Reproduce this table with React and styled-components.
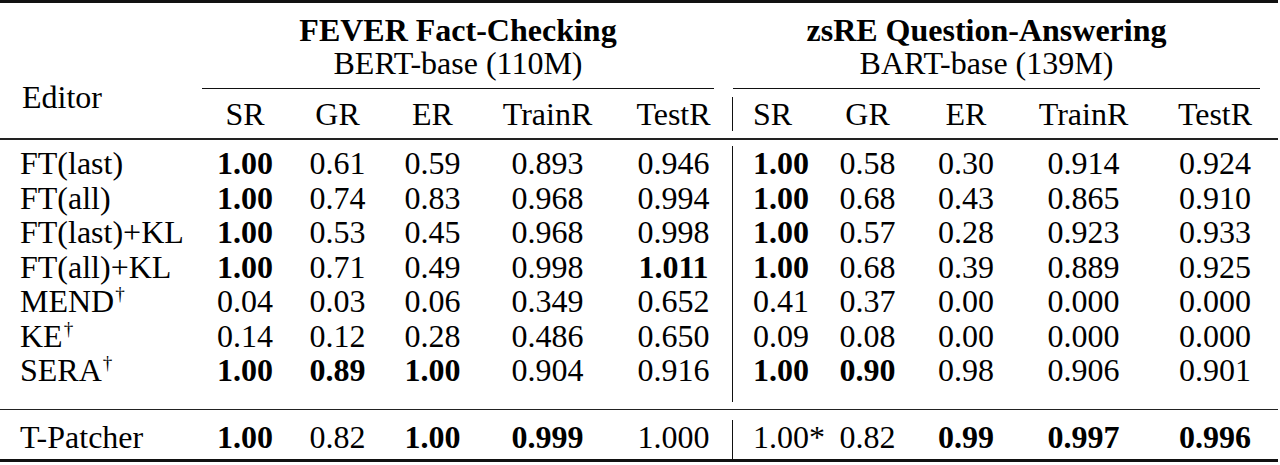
import styled, { createGlobalStyle } from "styled-components";

const COLS = "200px 90px 95px 95px 135px 117px 78px 115px 82px 153px 118px";

const GlobalStyle = createGlobalStyle`
  html, body {
    margin: 0;
    padding: 0;
    background: #fff;
  }
  body {
    font-family: "Liberation Serif", "Times New Roman", serif;
    color: #000;
  }
`;

const Table = styled.div`
  width: 1278px;
  border-top: 3px solid #111;
  border-bottom: 3px solid #111;
  font-size: 32px;
`;

const Block = styled.div`
  padding: ${(p) => p.$pad || "0"};
  border-bottom: ${(p) => p.$rule || "none"};
`;

const HeadGrid = styled.div`
  display: grid;
  grid-template-columns: ${COLS};
`;

const EditorCell = styled.div`
  grid-column: 1;
  grid-row: 1 / span 2;
  align-self: end;
  padding: 0 0 17px 22px;
  line-height: 34px;
`;

const Group = styled.div`
  grid-row: 1;
  grid-column: ${(p) => p.$col};
  display: flex;
  flex-direction: column;
  align-items: center;
  padding: 11px ${(p) => p.$shift || 0}px 8px 0;
  margin: 0 18px 0 ${(p) => p.$trim || 0}px;
  border-bottom: 1px solid #111;
  line-height: 33px;
`;

const GroupTitle = styled.div`
  font-weight: 700;
`;

const Row = styled.div`
  display: grid;
  grid-template-columns: ${COLS};
  height: ${(p) => p.$h || 34.5}px;
`;

const Cell = styled.div`
  grid-row: ${(p) => p.$row || "auto"};
  display: flex;
  align-items: ${(p) => (p.$top ? "flex-start" : "center")};
  justify-content: ${(p) =>
    p.$align === "left" ? "flex-start" : "center"};
  padding: ${(p) => p.$pad || "0"};
  padding-bottom: ${(p) => p.$lift || 0}px;
  margin-top: ${(p) => p.$mt || 0}px;
  height: ${(p) => (p.$ch ? `${p.$ch}px` : "auto")};
  line-height: 34px;
  font-weight: ${(p) => (p.$bold ? 700 : 400)};
  border-left: ${(p) => (p.$sep ? "1.5px solid #111" : "none")};
  white-space: nowrap;
`;

const Sup = styled.sup`
  font-size: 0.6em;
  line-height: 0;
  vertical-align: 0.62em;
  margin-left: 1px;
`;

const b = (v) => ({ v, bold: true });

const rows = [
  ["FT(last)", false, [b("1.00"), "0.61", "0.59", "0.893", "0.946"], [b("1.00"), "0.58", "0.30", "0.914", "0.924"]],
  ["FT(all)", false, [b("1.00"), "0.74", "0.83", "0.968", "0.994"], [b("1.00"), "0.68", "0.43", "0.865", "0.910"]],
  ["FT(last)+KL", false, [b("1.00"), "0.53", "0.45", "0.968", "0.998"], [b("1.00"), "0.57", "0.28", "0.923", "0.933"]],
  ["FT(all)+KL", false, [b("1.00"), "0.71", "0.49", "0.998", b("1.011")], [b("1.00"), "0.68", "0.39", "0.889", "0.925"]],
  ["MEND", true, ["0.04", "0.03", "0.06", "0.349", "0.652"], ["0.41", "0.37", "0.00", "0.000", "0.000"]],
  ["KE", true, ["0.14", "0.12", "0.28", "0.486", "0.650"], ["0.09", "0.08", "0.00", "0.000", "0.000"]],
  ["SERA", true, [b("1.00"), b("0.89"), b("1.00"), "0.904", "0.916"], [b("1.00"), b("0.90"), "0.98", "0.906", "0.901"]],
];

const patcher = ["T-Patcher", false, [b("1.00"), "0.82", b("1.00"), b("0.999"), "1.000"], ["1.00*", "0.82", b("0.99"), b("0.997"), b("0.996")]];

const metrics = ["SR", "GR", "ER", "TrainR", "TestR"];

const valueCells = (vals, start, extra, lift) =>
  vals.map((raw, i) => {
    const item = typeof raw === "string" ? { v: raw } : raw;
    const idx = start + i;
    const isSep = idx === 5;
    return (
      <Cell
        key={idx}
        $bold={item.bold}
        $sep={isSep}
        $align={isSep ? "left" : "center"}
        $top={extra}
        $lift={lift}
        $pad={isSep ? "0 0 0 20px" : idx === 9 ? "0 8px 0 0" : "0"}
      >
        {item.v}
      </Cell>
    );
  });

const DataRow = ({ row, h, extra, lift }) => {
  const [name, dagger, left, right] = row;
  return (
    <Row $h={h}>
      <Cell $align="left" $pad="0 0 0 20px" $top={extra} $lift={lift}>
        <span>
          {name}
          {dagger && <Sup>†</Sup>}
        </span>
      </Cell>
      {valueCells(left, 0, extra, lift)}
      {valueCells(right, 5, extra, lift)}
    </Row>
  );
};

export default function App() {
  return (
    <>
      <GlobalStyle />
      <Table>
        <Block $pad="0 0 7px" $rule="2px solid #222">
          <HeadGrid>
            <EditorCell>Editor</EditorCell>
            <Group $col="2 / span 5" $trim={2}>
              <GroupTitle>FEVER Fact-Checking</GroupTitle>
              <div>BERT-base (110M)</div>
            </Group>
            <Group $col="7 / span 5" $trim={1} $shift={20}>
              <GroupTitle>zsRE Question-Answering</GroupTitle>
              <div>BART-base (139M)</div>
            </Group>
            {metrics.concat(metrics).map((m, i) => {
              const isSep = i === 5;
              return (
                <Cell
                  key={i}
                  $row={2}
                  $mt={8}
                  $ch={34}
                  $sep={isSep}
                  $align={isSep ? "left" : "center"}
                  $pad={isSep ? "0 0 0 20px" : i === 9 ? "0 8px 0 0" : "0"}
                >
                  {m}
                </Cell>
              );
            })}
          </HeadGrid>
        </Block>
        <Block $pad="6px 0 7px" $rule="1.5px solid #222">
          {rows.map((r, i) => (
            <DataRow
              key={r[0]}
              row={r}
              h={i === rows.length - 1 ? 48.5 : 34.5}
              extra={i === rows.length - 1}
            />
          ))}
        </Block>
        <Block $pad="10px 0 7px">
          <DataRow row={patcher} h={32} lift={6} />
        </Block>
      </Table>
    </>
  );
}
